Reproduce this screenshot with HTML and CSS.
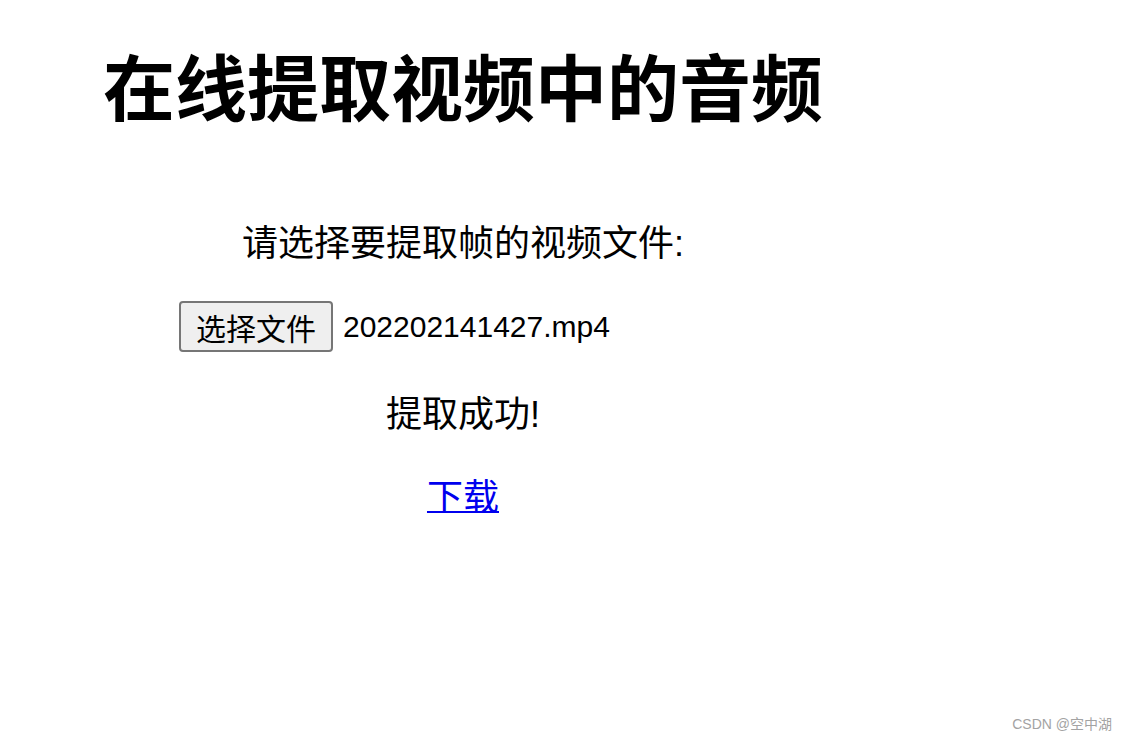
FILE: index.html
```html
<!DOCTYPE html>
<html lang="zh">
<head>
<meta charset="utf-8">
<title>在线提取视频中的音频</title>
<link rel="stylesheet" href="styles.css">
</head>
<body>
<div class="page">
  <h1 class="title">在线提取视频中的音频</h1>
  <p class="label">请选择要提取帧的视频文件:</p>
  <div class="file-row">
    <span class="file-btn">选择文件</span>
    <span class="file-name">202202141427.mp4</span>
  </div>
  <p class="status">提取成功!</p>
  <p class="dl"><a href="#" class="dl-link">下载</a></p>
</div>
<div class="watermark">CSDN @空中湖</div>
</body>
</html>
```
FILE: styles.css
```css
html, body {
  margin: 0;
  padding: 0;
  background: #fff;
}
body {
  width: 1126px;
  height: 741px;
  position: relative;
  overflow: hidden;
  font-family: "Liberation Sans", "Noto Sans CJK SC", sans-serif;
  color: #000;
}
.page {
  width: 720px;
  margin-left: 103px;
  text-align: center;
}
.title {
  font-size: 72px;
  font-weight: bold;
  line-height: 84px;
  margin: 48px 0 0;
  letter-spacing: 0;
}
.label {
  font-size: 36px;
  line-height: 42px;
  margin: 91px 0 0;
}
.file-row {
  display: flex;
  align-items: center;
  margin: 36px 0 0 76px;
  height: 51px;
}
.file-btn {
  box-sizing: border-box;
  width: 154px;
  height: 51px;
  display: flex;
  align-items: center;
  justify-content: center;
  background: #efefef;
  border: 2px solid #767676;
  border-radius: 4px;
  font-size: 30px;
}
.file-name {
  font-size: 30px;
  margin-left: 10px;
}
.status {
  font-size: 36px;
  line-height: 42px;
  margin: 42px 0 0;
}
.dl {
  font-size: 36px;
  line-height: 42px;
  margin: 41px 0 0;
}
.dl-link {
  color: #0000ee;
  text-decoration: underline;
  text-decoration-thickness: 2px;
}
.watermark {
  position: absolute;
  right: 14px;
  bottom: 8px;
  font-size: 14px;
  color: #a3a3a3;
}
```
